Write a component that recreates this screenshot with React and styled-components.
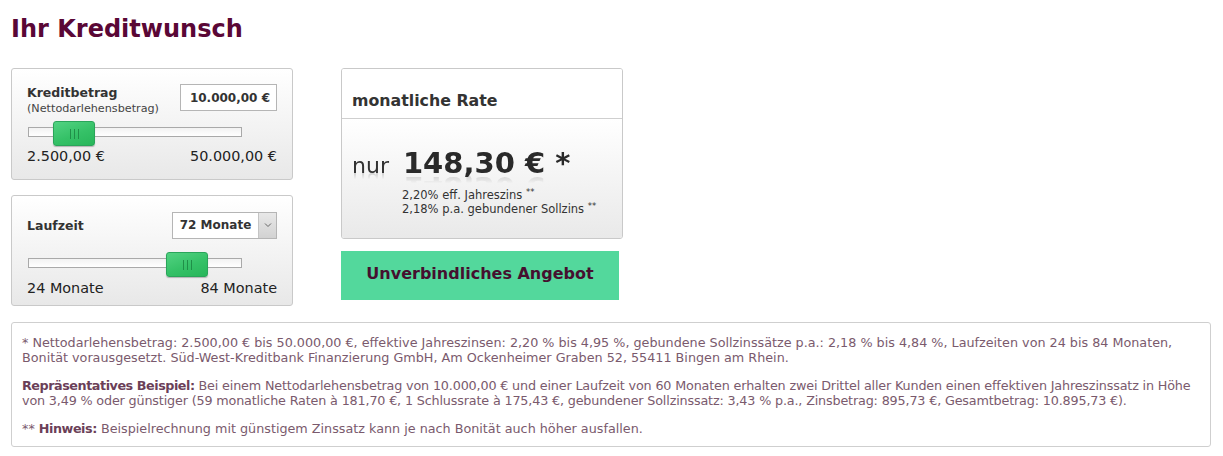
import React from 'react';
import styled, { createGlobalStyle } from 'styled-components';

const GlobalStyle = createGlobalStyle`
  body {
    margin: 0;
    background: #fff;
    font-family: "DejaVu Sans", Verdana, sans-serif;
    color: #333;
  }
`;

const App = () => {
  return (
    <Page>
      <GlobalStyle />
      <Title>Ihr Kreditwunsch</Title>
      <Row>
        <LeftColumn>
          <Panel $height={112}>
            <PanelHead $height={43}>
              <div>
                <Label>Kreditbetrag</Label>
                <SubLabel>(Nettodarlehensbetrag)</SubLabel>
              </div>
              <ValueBox>10.000,00 €</ValueBox>
            </PanelHead>
            <Slider position={24} gap={0} />
            <Range $gap={10}>
              <span>2.500,00 €</span>
              <span>50.000,00 €</span>
            </Range>
          </Panel>

          <Panel $height={111}>
            <PanelHead $height={28} $center>
              <Label>Laufzeit</Label>
              <Select>
                <SelectValue>72 Monate</SelectValue>
                <SelectArrow>
                  <svg width="8" height="6" viewBox="0 0 8 6">
                    <path d="M1 1.5 L4 4.5 L7 1.5" fill="none" stroke="#666" strokeWidth="1" />
                  </svg>
                </SelectArrow>
              </Select>
            </PanelHead>
            <Slider position={137} gap={19} />
            <Range $gap={11}>
              <span>24 Monate</span>
              <span>84 Monate</span>
            </Range>
          </Panel>
        </LeftColumn>

        <RightColumn>
          <RateCard>
            <RateHeader>monatliche Rate</RateHeader>
            <RateBody>
              <AmountLine>
                <Nur>nur</Nur>
                <Amount>148,30 € *</Amount>
              </AmountLine>
              <RateNote>
                2,20% eff. Jahreszins <Sup>**</Sup>
                <br />
                2,18% p.a. gebundener Sollzins <Sup>**</Sup>
              </RateNote>
            </RateBody>
          </RateCard>
          <OfferButton>Unverbindliches Angebot</OfferButton>
        </RightColumn>
      </Row>

      <Disclaimer>
        <Note>
          * Nettodarlehensbetrag: 2.500,00 € bis 50.000,00 €, effektive Jahreszinsen: 2,20 % bis 4,95 %,
          gebundene Sollzinssätze p.a.: 2,18 % bis 4,84 %, Laufzeiten von 24 bis 84 Monaten,
          <br />
          Bonität vorausgesetzt. Süd-West-Kreditbank Finanzierung GmbH, Am Ockenheimer Graben 52, 55411 Bingen am Rhein.
        </Note>
        <Note $tight>
          <b>Repräsentatives Beispiel:</b> Bei einem Nettodarlehensbetrag von 10.000,00 € und einer Laufzeit
          von 60 Monaten erhalten zwei Drittel aller Kunden einen effektiven Jahreszinssatz in Höhe
          <br />
          von 3,49 % oder günstiger (59 monatliche Raten à 181,70 €, 1 Schlussrate à 175,43 €, gebundener
          Sollzinssatz: 3,43 % p.a., Zinsbetrag: 895,73 €, Gesamtbetrag: 10.895,73 €).
        </Note>
        <Note>
          ** <b>Hinweis:</b> Beispielrechnung mit günstigem Zinssatz kann je nach Bonität auch höher ausfallen.
        </Note>
      </Disclaimer>
    </Page>
  );
};

const Slider = ({ position, gap }) => (
  <Track $gap={gap}>
    <Thumb style={{ left: position }}>
      <Grip />
      <Grip />
      <Grip />
    </Thumb>
  </Track>
);

const Page = styled.div`
  padding: 14px 12px 10px 11px;
  width: 1200px;
`;

const Title = styled.h1`
  margin: 0 0 24px;
  font-size: 24px;
  line-height: 30px;
  font-weight: bold;
  color: #5a0736;
`;

const Row = styled.div`
  display: flex;
  align-items: flex-start;
  gap: 48px;
`;

const LeftColumn = styled.div`
  width: 282px;
  display: flex;
  flex-direction: column;
  gap: 15px;
`;

const RightColumn = styled.div`
  width: 282px;
  display: flex;
  flex-direction: column;
  gap: 12px;
`;

const Panel = styled.div`
  box-sizing: border-box;
  height: ${(p) => p.$height}px;
  border: 1px solid #c9c9c9;
  border-radius: 3px;
  background: linear-gradient(#ffffff, #e8e8e8);
  padding: 15px 15px 0 15px;
`;

const PanelHead = styled.div`
  display: flex;
  justify-content: space-between;
  align-items: ${(p) => (p.$center ? 'center' : 'flex-start')};
  height: ${(p) => p.$height}px;
`;

const Label = styled.div`
  font-size: 12.5px;
  font-weight: bold;
  color: #333;
  line-height: 16px;
  padding-top: 1px;
`;

const SubLabel = styled.div`
  font-size: 11.2px;
  color: #444;
  line-height: 16px;
`;

const ValueBox = styled.div`
  box-sizing: border-box;
  width: 97px;
  height: 27px;
  border: 1px solid #b5b5b5;
  background: #fff;
  font-size: 12px;
  font-weight: bold;
  color: #333;
  display: flex;
  align-items: center;
  justify-content: flex-end;
  padding-right: 6px;
`;

const Select = styled.div`
  width: 105px;
  height: 27px;
  box-sizing: border-box;
  border: 1px solid #b5b5b5;
  background: #fff;
  display: flex;
`;

const SelectValue = styled.div`
  flex: 1;
  display: flex;
  align-items: center;
  justify-content: center;
  font-size: 12px;
  font-weight: bold;
  color: #333;
`;

const SelectArrow = styled.div`
  width: 17px;
  background: linear-gradient(#e8e8e8, #d2d2d2);
  border-left: 1px solid #c4c4c4;
  display: flex;
  align-items: center;
  justify-content: center;
`;

const Track = styled.div`
  position: relative;
  margin: ${(p) => p.$gap}px 35px 0 1px;
  height: 8px;
  border: 1px solid #a9a9a9;
  background: linear-gradient(#f2f2f2, #ffffff);
`;

const Thumb = styled.div`
  position: absolute;
  top: -7px;
  width: 42px;
  height: 25px;
  box-sizing: border-box;
  border: 1px solid #2aa55a;
  border-radius: 3px;
  background: linear-gradient(160deg, #52d282 0%, #35c167 55%, #28b65a 100%);
  box-shadow: 0 1px 1px rgba(0, 0, 0, 0.25);
  display: flex;
  align-items: center;
  justify-content: center;
  gap: 3px;
`;

const Grip = styled.span`
  width: 1px;
  height: 10px;
  background: #1f8f48;
`;

const Range = styled.div`
  display: flex;
  justify-content: space-between;
  margin-top: ${(p) => p.$gap}px;
  font-size: 14.4px;
  line-height: 18px;
  color: #222;
`;

const RateCard = styled.div`
  border: 1px solid #c9c9c9;
  border-radius: 3px;
  overflow: hidden;
  height: 171px;
  box-sizing: border-box;
  display: flex;
  flex-direction: column;
`;

const RateHeader = styled.div`
  height: 50px;
  box-sizing: border-box;
  border-bottom: 1px solid #cfcfcf;
  background: #fff;
  display: flex;
  align-items: center;
  padding: 13px 10px 0;
  font-size: 15.8px;
  font-weight: bold;
  color: #333;
`;

const RateBody = styled.div`
  flex: 1;
  background: linear-gradient(#ffffff, #e9e9e9);
  padding: 26px 10px 0 10px;
`;

const AmountLine = styled.div`
  display: flex;
  align-items: baseline;
  gap: 14px;
`;

const Nur = styled.span`
  font-size: 22px;
  color: #333;
  -webkit-box-reflect: below -10px linear-gradient(transparent 55%, rgba(0, 0, 0, 0.35));
`;

const Amount = styled.span`
  font-size: 29px;
  font-weight: bold;
  color: #2a2a2a;
  line-height: 36px;
  -webkit-box-reflect: below -12px linear-gradient(transparent 60%, rgba(0, 0, 0, 0.3));
`;

const RateNote = styled.div`
  margin: 7px 0 0 50px;
  font-size: 11.5px;
  line-height: 14px;
  color: #333;
`;

const Sup = styled.sup`
  font-size: 8.5px;
  vertical-align: 4px;
  line-height: 0;
`;

const OfferButton = styled.button`
  width: 278px;
  height: 49px;
  border: none;
  background: #53d89c;
  color: #45102f;
  font-family: "DejaVu Sans", Verdana, sans-serif;
  font-size: 16px;
  font-weight: bold;
  cursor: pointer;
  padding: 0 0 4px;
`;

const Disclaimer = styled.div`
  margin-top: 16px;
  border: 1px solid #cfcfcf;
  border-radius: 3px;
  padding: 12px 10px 10px 10px;
  font-size: 12.75px;
  line-height: 15px;
  color: #7a5a6d;
`;

const Note = styled.p`
  margin: 0 0 13px;
  white-space: nowrap;
  letter-spacing: ${(p) => (p.$tight ? '-0.16px' : 'normal')};

  &:last-child {
    margin-bottom: 0;
  }

  b {
    color: #6b3f58;
    letter-spacing: -0.45px;
  }
`;

export default App;
